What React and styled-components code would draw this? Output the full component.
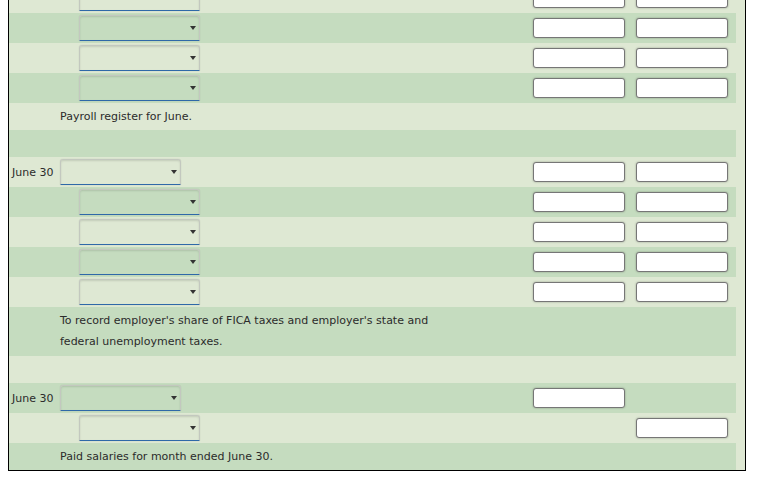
import React from 'react';
import styled, { createGlobalStyle } from 'styled-components';

const GlobalStyle = createGlobalStyle`
  html {
    background: #fff;
  }
  body {
    margin: 0;
    padding: 0 8px;
    font-family: 'DejaVu Sans', Verdana, sans-serif;
    font-size: 11px;
    color: #2b2b2b;
  }
`;

const rows = [
  { kind: 'entry', indent: true, debit: true, credit: true },
  { kind: 'entry', indent: true, debit: true, credit: true },
  { kind: 'entry', indent: true, debit: true, credit: true },
  { kind: 'entry', indent: true, debit: true, credit: true },
  { kind: 'note', text: ['Payroll register for June.'] },
  { kind: 'blank' },
  { kind: 'entry', date: 'June 30', debit: true, credit: true },
  { kind: 'entry', indent: true, debit: true, credit: true },
  { kind: 'entry', indent: true, debit: true, credit: true },
  { kind: 'entry', indent: true, debit: true, credit: true },
  { kind: 'entry', indent: true, debit: true, credit: true },
  {
    kind: 'note',
    text: [
      "To record employer's share of FICA taxes and employer's state and",
      'federal unemployment taxes.',
    ],
  },
  { kind: 'blank' },
  { kind: 'entry', date: 'June 30', debit: true },
  { kind: 'entry', indent: true, credit: true },
  { kind: 'note', text: ['Paid salaries for month ended June 30.'] },
];

export default function App() {
  return (
    <>
      <GlobalStyle />
      <Frame>
        <Journal>
          {rows.map((row, i) => {
            const shade = i % 2 === 1;
            if (row.kind === 'note') {
              return (
                <NoteRow key={i} $shade={shade} $lines={row.text.length}>
                  <Label />
                  <Note>
                    {row.text.map((line, j) => (
                      <React.Fragment key={j}>
                        {j > 0 && <br />}
                        {line}
                      </React.Fragment>
                    ))}
                  </Note>
                </NoteRow>
              );
            }
            if (row.kind === 'blank') {
              return <NoteRow key={i} $shade={shade} $lines={1} />;
            }
            return (
              <EntryRow key={i} $shade={shade}>
                <Label>{row.date}</Label>
                <Account>
                  <Select $indent={row.indent} />
                </Account>
                <Amount>{row.debit && <AmountInput type="text" />}</Amount>
                <Amount>{row.credit && <AmountInput type="text" />}</Amount>
              </EntryRow>
            );
          })}
        </Journal>
      </Frame>
    </>
  );
}

/* STYLES */
// the journal is scrolled: its first row is cut off at the top of the window
const Frame = styled.div`
  width: 736px;
  margin-top: -18px;
  border: 1px solid #000;
  background: #dee8d3;
`;

const Journal = styled.div`
  width: 727px;
  display: flex;
  flex-direction: column;
`;

const EntryRow = styled.div`
  display: flex;
  align-items: center;
  height: 30px;
  padding: 0 8px 0 3px;
  background: ${p => (p.$shade ? '#c5dcbf' : '#dee8d3')};
`;

const NoteRow = styled.div`
  display: flex;
  min-height: 27px;
  padding: 3px 8px ${p => (p.$lines > 1 ? 4 : 3)}px 3px;
  box-sizing: border-box;
  background: ${p => (p.$shade ? '#c5dcbf' : '#dee8d3')};
`;

const Label = styled.div`
  width: 48px;
  flex: none;
  line-height: 21px;
  white-space: nowrap;
`;

const Note = styled.div`
  line-height: 21px;
`;

const Account = styled.div`
  flex: 1;
  display: flex;
  align-items: center;
`;

const Select = styled.div`
  position: relative;
  width: 121px;
  height: 26px;
  box-sizing: border-box;
  margin-left: ${p => (p.$indent ? '19px' : '0')};
  border: 1px solid #c3c8bf;
  border-bottom: 1px solid #2f69a8;
  border-radius: 3px 3px 0 0;
  box-shadow: inset 0 1px 2px rgba(0, 0, 0, 0.12), 0 0 1px rgba(0, 0, 0, 0.2);

  &::after {
    content: '';
    position: absolute;
    right: 3px;
    top: 50%;
    margin-top: -2px;
    border-left: 3px solid transparent;
    border-right: 3px solid transparent;
    border-top: 4px solid #333;
  }
`;

const Amount = styled.div`
  width: 92px;
  flex: none;
  margin-left: 11px;
  display: flex;
`;

const AmountInput = styled.input`
  width: 92px;
  height: 20px;
  box-sizing: border-box;
  margin: 0;
  padding: 0 4px;
  border: 1px solid #767676;
  border-radius: 3px;
  background: #fff;
  box-shadow: 0 0 2px rgba(0, 0, 0, 0.35);
  outline: none;
`;
/* END STYLES */
